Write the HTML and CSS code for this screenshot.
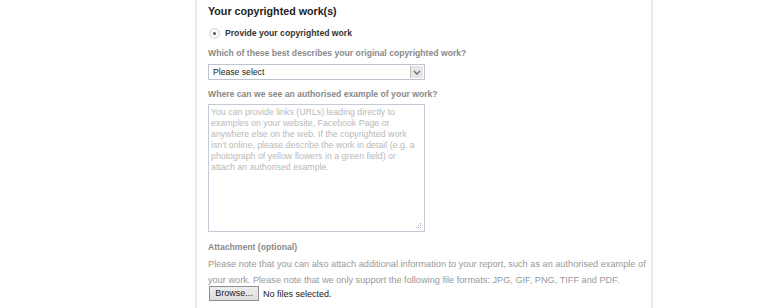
FILE: index.html
```html
<!DOCTYPE html>
<html lang="en">
<head>
    <meta charset="utf-8" />
    <title>Your copyrighted work(s)</title>
    <link rel="stylesheet" href="styles.css">
</head>
<body>
    <div class="panel">
        <h2 class="title">Your copyrighted work(s)</h2>

        <div class="radioRow">
            <span class="radio"><span class="dot"></span></span>
            <span class="radioLabel">Provide your copyrighted work</span>
        </div>

        <div class="label">Which of these best describes your original copyrighted work?</div>
        <div class="select">
            <span class="selectText">Please select</span>
            <span class="selectBtn">
                <svg width="8" height="5" viewBox="0 0 8 5"><path d="M1 1 L4 4 L7 1" fill="none" stroke="#6b6b6b" stroke-width="1.3" /></svg>
            </span>
        </div>

        <div class="label">Where can we see an authorised example of your work?</div>
        <div class="areaBox">
            <textarea class="area" placeholder="You can provide links (URLs) leading directly to examples on your website, Facebook Page or anywhere else on the web. If the copyrighted work isn't online, please describe the work in detail (e.g. a photograph of yellow flowers in a green field) or attach an authorised example."></textarea>
            <svg class="grip" width="6" height="6" viewBox="0 0 6 6" fill="#a8a8a8">
                <rect x="4" y="0" width="1" height="1" />
                <rect x="2" y="2" width="1" height="1" /><rect x="4" y="2" width="1" height="1" />
                <rect x="0" y="4" width="1" height="1" /><rect x="2" y="4" width="1" height="1" /><rect x="4" y="4" width="1" height="1" />
            </svg>
        </div>

        <div class="label">Attachment (optional)</div>
        <p class="note">Please note that you can also attach additional information to your report, such as an authorised example of your work. Please note that we only support the following file formats: JPG, GIF, PNG, TIFF and PDF.</p>

        <div class="fileRow">
            <button class="browse" type="button">Browse...</button>
            <span class="fileText">No files selected.</span>
        </div>
    </div>
</body>
</html>
```

FILE: styles.css
```css
body,
div,
span,
h2,
p {
    margin: 0;
    padding: 0
}

body {
    background: #fff;
    font-family: "Liberation Sans", Arial, sans-serif;
    font-size: 8.65px;
    color: #333
}

.panel {
    width: 443px;
    height: 320px;
    margin-left: 195px;
    padding: 3px 0 0 11px;
    border-left: 2px solid #ebebeb;
    border-right: 2px solid #ebebeb
}

.title {
    font-size: 10.7px;
    line-height: 16px;
    font-weight: bold;
    color: #222
}

.radioRow {
    display: flex;
    align-items: center;
    height: 16px;
    margin-top: 6px;
    padding-left: 1px
}

.radio {
    width: 9px;
    height: 9px;
    border: 1px solid #d4d4d4;
    border-radius: 50%;
    background: #fafafa;
    display: flex;
    align-items: center;
    justify-content: center
}

.radio .dot {
    width: 3px;
    height: 3px;
    border-radius: 50%;
    background: #555
}

.radioLabel {
    margin-left: 5px;
    font-weight: bold;
    color: #333
}

.label {
    font-weight: bold;
    color: #8a8a8a;
    line-height: 16px;
    margin-top: 4px
}

.select {
    width: 215px;
    height: 14px;
    border: 1px solid #bdc3cf;
    display: flex;
    align-items: center;
    justify-content: space-between;
    margin-top: 3px;
    margin-bottom: 6px
}

.selectText {
    padding-left: 4px;
    color: #222
}

.selectBtn {
    width: 12px;
    height: 12px;
    margin-right: 1px;
    background: #e6e6e6;
    border-left: 1px solid #c4c4c4;
    display: flex;
    align-items: center;
    justify-content: center
}

.areaBox {
    position: relative;
    width: 217px;
    margin: 2px 0 7px
}

.area {
    display: block;
    box-sizing: border-box;
    width: 217px;
    height: 128px;
    padding: 2px 3px 1px 2px;
    border: 1px solid #c4cad6;
    font-family: "Liberation Sans", Arial, sans-serif;
    font-size: 8.8px;
    line-height: 11px;
    color: #333;
    outline: none;
    overflow: hidden;
    resize: none
}

.area::placeholder {
    color: #b9b9b9
}

.grip {
    position: absolute;
    right: 3px;
    bottom: 3px
}

.note {
    color: #999;
    font-size: 9.2px;
    line-height: 16px;
    margin-top: 1px
}

.fileRow {
    display: flex;
    align-items: center;
    margin-top: -2px
}

.browse {
    font-family: "Liberation Sans", Arial, sans-serif;
    font-size: 9px;
    height: 15px;
    width: 50px;
    padding: 0;
    border: 1px solid #8f8f8f;
    background: linear-gradient(#eee, #dcdcdc);
    color: #222;
    line-height: 13px;
    margin-left: 1px
}

.fileText {
    margin-left: 4px;
    font-size: 9px;
    color: #222
}
```
